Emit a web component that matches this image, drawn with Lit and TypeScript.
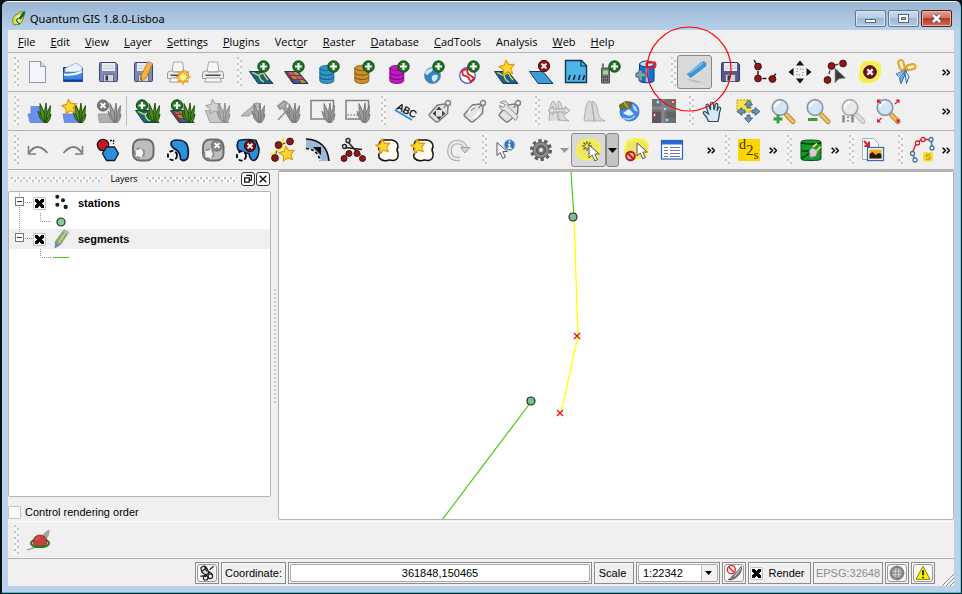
import { LitElement, html, svg, css, nothing, type TemplateResult } from "lit";
import { customElement, property } from "lit/decorators.js";
import { classMap } from "lit/directives/class-map.js";

/* ---------- shared icon parts, all in a 24 x 24 box ---------- */

const cross = (x: number, y: number, s: number, color: string, w: number) =>
  svg`<path d="M${x - s} ${y - s}l${2 * s} ${2 * s}M${x + s} ${y - s}l${-2 * s} ${2 * s}" stroke=${color} stroke-width=${w} fill="none"/>`;

const plus = (x = 14.5, y = 6.5) => svg`
  <circle cx=${x} cy=${y} r="5.7" fill="#1f7322" stroke="#0d4a12" stroke-width="1"/>
  <path d="M${x - 3.4} ${y}h6.8M${x} ${y - 3.4}v6.8" stroke="#fff" stroke-width="2.2"/>`;

const removeBadge = (x: number, y: number, fill = "#8e1616", edge = "#4e0808") => svg`
  <circle cx=${x} cy=${y} r="5.6" fill=${fill} stroke=${edge}/>
  ${cross(x, y, 2.4, "#fff", 2)}`;

const star = (x: number, y: number, r = 8, fill = "#ffd92e", edge = "#e29a10") => {
  const pts: string[] = [];
  for (let i = 0; i < 10; i++) {
    const a = -Math.PI / 2 - 0.15 + (i * Math.PI) / 5;
    const q = i % 2 ? r * 0.48 : r;
    pts.push(`${(x + q * Math.cos(a)).toFixed(1)},${(y + q * Math.sin(a)).toFixed(1)}`);
  }
  return svg`<polygon points=${pts.join(" ")} fill=${fill} stroke=${edge} stroke-width="1.2" stroke-linejoin="round"/>`;
};

const burst = (x: number, y: number) => {
  const pts: string[] = [];
  for (let i = 0; i < 16; i++) {
    const a = (i * Math.PI) / 8;
    const q = i % 2 ? 3.6 : 7;
    pts.push(`${(x + q * Math.cos(a)).toFixed(1)},${(y + q * Math.sin(a)).toFixed(1)}`);
  }
  return svg`<polygon points=${pts.join(" ")} fill="#fff48a" stroke="#f5a012" stroke-width="1.3"/>`;
};

const grass = (fill = "#4c8f1d", edge = "#17400a") => svg`
  <g fill=${fill} stroke=${edge} stroke-width=".8" stroke-linejoin="round">
    <path d="M18 23.500Q13 20 12 12Q16 16 19 23.500Z"/><path d="M19 23.500Q13 17 14 4.500Q19 12 20 23.500Z"/>
    <path d="M19 23.500Q17.500 12 20 4Q22 14 20.500 23.500Z"/><path d="M19.500 23.500Q20 13 24.500 6.500Q25 16 21 23.500Z"/>
    <path d="M20 23.500Q21 18 25 15Q24.500 21 21.500 23.500Z"/>
  </g>`;

const sheet = (fill: string) => svg`<path d="M.5 11.500H14L24 23.500H9z" fill=${fill} stroke="#15405c" stroke-width="1"/>`;

const vectorSheet = svg`${sheet("#1d5f8c")}
  <path d="M3 13c3-1 4 3 7 2s4-3 5-1 1 3 4 6M10 15c1 3 0 5 5 7" stroke="#dcea3a" stroke-width="1.300" fill="none"/>`;

const rasterSheet = svg`${sheet("#7c3846")}
  <path d="M4 12h4l2.500 3h-4z" fill="#cf5673"/><path d="M9 12h4l2.500 3h-4z" fill="#b8974b"/>
  <path d="M7 16h4l2.500 3h-4z" fill="#b3902e"/><path d="M12 16h4.500l2.500 3h-4.500z" fill="#c85873"/>
  <path d="M10 20h4l2 3h-4z" fill="#2f5fb0"/><path d="M15.500 20h4l2.500 3h-4.500z" fill="#b88d35"/>`;

const cylinder = (fill: string, edge: string) => svg`
  <path d="M.8 8v12.500c0 4 14 4 14 0V8" fill=${fill} stroke=${edge} stroke-width=".8"/>
  <ellipse cx="7.800" cy="8" rx="7" ry="2.600" fill=${fill} stroke=${edge} stroke-width=".8"/>
  <path d="M.8 12.500c0 3.600 14 3.600 14 0M.8 16.800c0 3.600 14 3.600 14 0" stroke=${edge} stroke-width="1" fill="none"/>`;

const floppy = (body: string, edge = "#39456e") => svg`
  <path d="M3.500 3.500q0-1 1-1h15l2 2v16q0 1-1 1h-16q-1 0-1-1z" fill=${body} stroke=${edge} stroke-width="1"/>
  <path d="M6 3h13v8H6z" fill="#eceef4"/><path d="M7 6h11M7 8.500h11" stroke="#c3c8d6"/>
  <path d="M7.500 14.500h10v7h-10z" fill="#d3d6de" stroke="#555e80" stroke-width=".8"/><path d="M9.500 15.500H12v5H9.500z" fill="#2c3558"/>`;

const printer = svg`
  <path d="M7.500 2h9l1.500 10H6z" fill="#f6f6f6" stroke="#a6a6a6"/>
  <path d="M1.500 14q0-3 3-3H7v1h10v-1h2.500q3 0 3 3v4.500h-21z" fill="#ececec" stroke="#9a9a9a"/>
  <path d="M4.500 14.500h15v1.500h-15z" fill="#4f4f4f"/><path d="M5 18h14l1.500 4h-17z" fill="#fafafa" stroke="#a0a0a0"/>`;

const node = (x: number, y: number, r = 3.4) =>
  svg`<circle cx=${x} cy=${y} r=${r} fill="#8e1818" stroke="#430707" stroke-width=".9"/>`;

const cursor = (x: number, y: number, fill = "#fff", edge = "#555") => svg`
  <path d="M${x} ${y}v13l3.200-3 2.600 5.800 2.600-1.200-2.600-5.600h4.500z" fill=${fill} stroke=${edge} stroke-width="1"/>`;

const ring = svg`<rect x="2" y="1.500" width="20.500" height="21" rx="7" fill="#bdbdbd" stroke="#6c6c6c" stroke-width="2"/>`;
const hole = (x: number, y: number, edge = "#000") =>
  svg`<circle cx=${x} cy=${y} r="4.600" fill="#f3f3f3" stroke=${edge} stroke-width="1.800" stroke-dasharray="4 2"/>`;

const lens = (fill: string, edge: string, handle: string, rim: string) => svg`
  <path d="M15.500 16l6.500 6.500" stroke=${rim} stroke-width="5" stroke-linecap="round"/>
  <path d="M15.500 16l6.500 6.500" stroke=${handle} stroke-width="3.200" stroke-linecap="round"/>
  <circle cx="9" cy="8.500" r="7.800" fill=${fill} stroke=${edge} stroke-width="1.700"/>
  <path d="M4 8q1-4.500 5-5" stroke="#fff" stroke-width="2" fill="none"/>`;
const colorLens = lens("#d3e6f5", "#8a98a5", "#f3bf5c", "#a97c35");

const tag = svg`<path d="M2 14.500L9.500 6l7.500-1 3 2.500-.500 7L11 22q-2 2-4 0l-5-4.500q-1.500-1.500 0-3z" fill="#e4e4e4" stroke="#7d7d7d" stroke-width="1.500"/>
  <circle cx="20" cy="4" r="2.500" fill="none" stroke="#838383" stroke-width="1.400"/><path d="M15.500 9l3-3" stroke="#838383" stroke-width="1.300"/>`;

const blobStar = svg`
  <path d="M7 2h9q6 1 6 7-2 3 0 6 1 7-5 7.500-4-1-6 0-5 1-8-3-1-4 2-5.500-3-1.500-2-6 0-5 4-6z" fill="#fffdf2" stroke="#111" stroke-width="1.500"/>${star(7, 8.500, 7.500)}`;

const blob = (y = 0) => svg`
  <path d="M4 ${4 + y}q8-3 15-1 5 4 3 9 0 8-6 8-6 2-12 0-5-4-3-9 0-4 3-7z" fill="#ebe56e" stroke="#f8f33c" stroke-width="2.500"/>`;

/* ---------- icons ---------- */

const icons: Record<string, TemplateResult> = {
  doc: svg`<path d="M3.500 1.500h11l5 5v16h-16z" fill="#f4f6fb" stroke="#8e96a8"/><path d="M14.500 1.500v5h5" fill="#d3d9e8" stroke="#8e96a8"/>`,
  open: svg`<path d="M2.500 7.500h5l2 1h12v13h-19z" fill="#2b66c4" stroke="#123c86"/><path d="M4 8.500l11-5.500 6 4v5H4z" fill="#eef2fa" stroke="#8ea6cf" stroke-width=".8"/>
    <path d="M2.500 12.500q10 1 19-2.500v11.500h-19z" fill="#4488e6"/><path d="M3 19.500h18.500v2H3z" fill="#0d3a8e"/><path d="M3 14.500q10 1 18-3" stroke="#f0f7ff" stroke-width="2" fill="none"/>`,
  save: floppy("#7d8ab3"),
  saveAs: svg`${floppy("#7d8ab3")}<path d="M10 16L17 1.500l4.500 2L15 18l-4 3z" fill="#f9b233" stroke="#b87614" stroke-width=".8"/><path d="M17 1.500l4.500 2-1 2.300L16 3.700z" fill="#e9a08c"/>`,
  print: printer,
  printNew: svg`${printer}${burst(17, 17)}`,
  addVector: svg`${vectorSheet}${plus()}`,
  addRaster: svg`${rasterSheet}${plus()}`,
  addPostgis: svg`${cylinder("#2f96c8", "#12597d")}${plus()}`,
  addSpatialite: svg`${cylinder("#cc9128", "#7a5210")}${plus()}`,
  addMssql: svg`${cylinder("#c416c4", "#6d0a6d")}${plus()}`,
  addWms: svg`<circle cx="8.500" cy="15.500" r="8" fill="#3584bd" stroke="#5d86a3" stroke-width=".8"/><path d="M2 11q3-3 7-3 0 4-4 5-1 4-4 0zM8 16q4-3 6 0-1 5-4 6-3-2-2-6z" fill="#cfe8f7"/>${plus()}`,
  addWfs: svg`<circle cx="8.500" cy="15.500" r="7.800" fill="#fdfdff" stroke="#3a57c4" stroke-width="1.200"/><path d="M3 11l5-2 1 5 6 4-3 4-3-5-5-2z" fill="none" stroke="#e02020" stroke-width="1.800"/>${plus()}`,
  newVector: svg`${vectorSheet}${star(13, 8, 8)}`,
  removeLayer: svg`${sheet("#3c9adb")}${removeBadge(15, 6)}`,
  digits: svg`<path d="M1.500 .5h16l5 5v17h-21z" fill="#4cb6e8" stroke="#16354a" stroke-width="1.400"/><path d="M17 1v5h5" fill="none" stroke="#16354a" stroke-width="1.200"/><path d="M6 15l-1.500 5M11 15l-1.500 5M16 15l-1.500 5M20.500 15l-1.500 5" stroke="#0c2231" stroke-width="1.500"/>`,
  gps: svg`<path d="M2.500 8h8v15h-8z" fill="#6f7a70" stroke="#4a514b"/><path d="M4 3.500V9" stroke="#777" stroke-width="2"/><path d="M4 10.500h5v4H4z" fill="#a8cfa0"/><path d="M4 17h6M4 20h6" stroke="#30362f" stroke-width="1.500" stroke-dasharray="1 1"/>${plus(15.5, 6.5)}`,
  oracle: svg`<path d="M5.500 4v16.500c0 3 14.500 3 14.500 0V4" fill="#1670d0" stroke="#0a3a86"/><ellipse cx="12.800" cy="4" rx="7.200" ry="3" fill="#b9ddfb" stroke="#0a3a86"/><path d="M13 8v14" stroke="#9ad0ff" stroke-width="2.500"/>
    <rect x="12.500" y="2.500" width="9" height="5" rx="1.500" fill="none" stroke="#f01414" stroke-width="1.800"/><path d="M2 13h3v-3h3.500v3H12v4H8.500v4H5v-4H2z" fill="#7aa3b0" stroke="#35616f"/>`,
  pencil: svg`<path d="M3 19q8 0 17 3.500-9 1-17-3.500z" fill="#bdbdbd"/><path d="M4 14.500L18.500 2.500q2-1.500 3.700 0t.300 3.700L8.500 17 4 17.500z" fill="#3d97dc" stroke="#2d79bb" stroke-width=".7"/><path d="M6.500 13L20 2.800" stroke="#8cc7f2" stroke-width="1.300"/><path d="M1.500 18.500l2.500-4 3 3z" fill="#ecdfc8"/>`,
  saveEdits: floppy("#54598c", "#35396a"),
  addFeature: svg`<path d="M1 0l4 7v11.500h14.500l4-6" stroke="#222" stroke-width="1.500" stroke-dasharray="4 2" fill="none"/>${node(5, 6.500)}${node(5, 18.500)}${node(19.5, 19)}`,
  moveFeature: svg`<path d="M12 .5l4 5H8zM12 23.500l4-5H8zM.5 12l5-4v8zM23.500 12l-5-4v8z" fill="#111"/><path d="M9 9h6v6H9z" fill="none" stroke="#666" stroke-dasharray="1 2"/>`,
  nodeTool: svg`<path d="M4.500 20l3.500-14 12-3" stroke="#333" stroke-width="1.300" stroke-dasharray="4 2" fill="none"/>${node(20, 3.500)}${node(8.500, 6)}${node(4.500, 20)}<path d="M12 8v15l3.500-4 7-1z" fill="#3c3c3c" stroke="#999" stroke-width=".7"/>`,
  deleteFeature: svg`<path d="M3 6q3-5 9-4 8-1 10 4 1 6-1 11-4 5-10 5-7 1-9-3-1-6 1-13z" fill="#f3ec62" stroke="#f8f33c" stroke-width="1.800"/><circle cx="12" cy="12" r="6.300" fill="#7c1010" stroke="#2c0505"/>${cross(12, 12, 2.600, "#fff", 2.200)}`,
  cut: svg`<path d="M14 10L8 23.500 6.500 18z" fill="#6db4ef" stroke="#2768ac"/><path d="M11.500 9l2 14.500 2.500-7z" fill="#e4f2fd" stroke="#2768ac"/><path d="M3 14l12-5.500L5.500 16.500z" fill="#8cc6f5" stroke="#2768ac" stroke-width=".8"/>
    <rect x="6" y="0" width="5" height="10" rx="2.500" transform="rotate(-14 8.500 5)" fill="none" stroke="#eda01e" stroke-width="2"/><rect x="13" y="4.500" width="9.500" height="5" rx="2.500" transform="rotate(-14 18 7)" fill="none" stroke="#eda01e" stroke-width="2"/>`,

  grassOpen: svg`<path d="M2 15h3V7.500h9V13h5l-1 10.500H4z" fill="#6b90ee" stroke="#5a80e0" stroke-width=".8"/>${grass()}`,
  grassNew: svg`<path d="M2 15h16v8.500H3.500z" fill="#6b90ee" stroke="#5a80e0" stroke-width=".8"/>${grass()}${star(8.5, 8, 7.800)}`,
  grassClose: svg`<path d="M2 15h16v8.500H3.500z" fill="#b0b0b0" stroke="#a0a0a0"/>${grass("#9b9b9b", "#707070")}${removeBadge(7, 6.500, "#777", "#686868")}`,
  grassVector: svg`${vectorSheet}${grass()}${plus(7, 6.500)}`,
  grassRaster: svg`${rasterSheet}${grass()}${plus(7, 6.500)}`,
  grassCreate: svg`<path d="M.5 11.500H14L24 23.500H5z" fill="#c8c8c8" stroke="#a0a0a0"/>${star(8.5, 8, 7.800, "#d2d2d2", "#ababab")}${grass("#aeaeae", "#858585")}`,
  grassEdit: svg`<path d="M1 17L16 4q3-1 4 2L9 17z" fill="#bcbcbc" stroke="#999"/>${grass("#9b9b9b", "#737373")}`,
  grassTools: svg`<path d="M3 7l6-5 3 2-2 3 10 14-3 2L8 9 5 10zM3 21L15 8" fill="#b0b0b0" stroke="#969696" stroke-width="1.800"/>${grass("#9b9b9b", "#737373")}`,
  grassRegion: svg`<rect x="1" y="1.500" width="22.500" height="18.500" fill="#f0f0f0" stroke="#808080" stroke-width="1.500"/>${grass("#9b9b9b", "#737373")}`,
  grassRegionEdit: svg`<rect x="1" y="1.500" width="22.500" height="18.500" fill="#f0f0f0" stroke="#808080" stroke-width="1.500"/><path d="M2 16h16" stroke="#808080" stroke-dasharray="2 1"/>${grass("#9b9b9b", "#737373")}`,
  label: svg`<text x="3" y="10" transform="rotate(27 3 10)" font-family="Liberation Sans, sans-serif" font-size="10" fill="#000" stroke="#000" stroke-width=".3">ABC</text><path d="M2 11l17 10" stroke="#1f8cf5" stroke-width="1.800"/>`,
  labelMove: svg`${tag}<path d="M11 7.500l3 3.500H8zM11 21l3-3.500H8zM4.500 14.500l3.500-3v6zM17.500 14.500l-3.500-3v6z" fill="#454545"/>`,
  labelRotate: svg`${tag}<path d="M6 14q1-5 6-6M16 12q-1 6-6 7" stroke="#fafafa" stroke-width="2.500" fill="none"/><path d="M8 12q1-3 4-3" stroke="#777" fill="none"/>`,
  labelChange: svg`${tag}<path d="M2 3.500q5-3.500 8 1v3l10 10-2.500 4L7 11.500q-5 0-5.500-5l4 2 2-3z" fill="#e6e6e6" stroke="#8a8a8a"/>`,
  stretchA: svg`<path d="M2 22q1-20 4-20t4 12l3 7.500M11 21V2q4 0 5 12 1 6 6 8z" fill="#d9d9d9" stroke="#b0b0b0"/><path d="M1 11.500l5-4v2.500h12V7.500l5 4-5 4V13H6v2.500z" fill="#dedede" stroke="#9d9d9d" stroke-width=".9"/>`,
  stretchB: svg`<path d="M2 22q2-20 5-20 3 0 4 12l2 8zM10 2q5 1 6 12 1 6 7 8H12z" fill="#d9d9d9" stroke="#b0b0b0"/>`,
  globe: svg`<circle cx="12.500" cy="12.500" r="9.500" fill="#3f86ea" stroke="#2c62ad" stroke-width=".8"/><path d="M6 14q6 5 11 1l-5-5z" fill="#e4f1ff"/><path d="M15 5l4 3 2 5-4-2z" fill="#bcdcff"/><path d="M6 19q7 3 12-2" stroke="#a3ccff" stroke-width="1.500" fill="none"/><path d="M2.500 6l6-3.500 6 1-1 5-5 1-5 1z" fill="#5d7d34" stroke="#7a4f22" stroke-width="1"/><path d="M7 3l4 6" stroke="#c2a349" stroke-width="1.500"/>`,
  georef: svg`<path d="M0 0h24v24H0z" fill="#717171"/><path d="M0 9h24M11 0v24" stroke="#888" stroke-width="3"/><path d="M0 13h9v11H0z" fill="#5b5b5b"/><path d="M15 13h9v6h-9z" fill="#646464"/><circle cx="6" cy="3" r="1.500" fill="#e8f2ff" stroke="#5b90c7"/><circle cx="13" cy="10" r="1.500" fill="#e8f2ff" stroke="#5b90c7"/><circle cx="15" cy="21" r="1.500" fill="#e8f2ff" stroke="#5b90c7"/><circle cx="21" cy="3" r="1.500" fill="#fff" stroke="#cf2222"/><circle cx="2.500" cy="16" r="1.500" fill="#fff" stroke="#cf2222"/>`,
  pan: svg`<path d="M7.500 22.500q-1-4-5-8-1-2 1.500-2l3.500 2.500L5 7q0-2.500 2.200-1.500L9.500 11V4.500q1-2.500 3 0L13 11l1.500-6q1.500-1.500 2.300 .5L16 12l1.500-3.500q2-1 2.200 1Q18 14 18 18l-1 4.500z" fill="#d3eafa" stroke="#2c4658" stroke-width="1.200"/>`,
  panSelection: svg`<path d="M1 1h14v12H1z" fill="#fbe24a" stroke="#b39a20" stroke-dasharray="2 1"/><path d="M12.500 1l4 5h-2.500v3h-3V6H8.500zM12.500 23.500l4-4.500h-2.500v-3h-3v3H8.500zM1 12.500l5-4V11h3v3H6v2.500zM24 12.500l-5-4V11h-3v3h3v2.500z" fill="#6b96b0" stroke="#385f77" stroke-width=".9"/>`,
  zoomIn: svg`${colorLens}<path d="M2.500 20h9M7 15.500v9" stroke="#3a9a3c" stroke-width="2.800"/>`,
  zoomOut: svg`${colorLens}<path d="M2 20.500h9.500" stroke="#3a9a3c" stroke-width="3"/>`,
  zoomNative: svg`${lens("#e9e9e9", "#aaa", "#dcdcdc", "#b0b0b0")}<path d="M2.500 16v7.500M11.500 16v7.500" stroke="#8a8a8a" stroke-width="2.500"/><path d="M7 17.500v1.500M7 21v1.500" stroke="#8a8a8a" stroke-width="2"/>`,
  zoomFull: svg`${colorLens}<path d="M1 .5h4L1 4.500zM23.500 .5h-4l4 4zM1 23.500h4L1 19.500zM23.500 23.500h-4l4-4z" fill="#d81f2c"/><path d="M2 1.500L5 4.500M22.500 1.500L19 5M2 22.500L5.500 19M22.500 22.500L20.500 20.500" stroke="#d81f2c" stroke-width="1.300"/>`,

  undo: svg`<path d="M3 15Q11 3 21.500 15" stroke="#7d7d7d" stroke-width="1.800" fill="none"/><path d="M2.500 8v8h7.500" stroke="#7d7d7d" stroke-width="1.600" fill="none"/>`,
  redo: svg`<path d="M2.500 15Q13 3 21 15" stroke="#7d7d7d" stroke-width="1.800" fill="none"/><path d="M21.500 8v8h-7.500" stroke="#7d7d7d" stroke-width="1.600" fill="none"/>`,
  simplify: svg`<circle cx="7" cy="7" r="5.700" fill="#c81920" stroke="#111" stroke-width="1.200"/><path d="M10.500 9h8l4 6.500-4 7h-8l-4-7z" fill="#2d8fdc" stroke="#0d1c33" stroke-width="1.300"/><path d="M14 2.500h3.500V6" stroke="#111" stroke-width="1.300" stroke-dasharray="2 1" fill="none"/>`,
  addRing: svg`${ring}${hole(8.5, 15, "#8b8b8b")}`,
  addPart: svg`<path d="M5 5q1-3 6-3 9 0 10.500 6 2 8-.500 13-4 3-6.500 0 0-6-4-9-6-3-5.500-7z" fill="#2d8fdc" stroke="#0d1c33" stroke-width="1.700"/>${hole(6.5, 17.500)}`,
  deleteRing: svg`${ring}${hole(8, 16, "#8b8b8b")}${removeBadge(16, 7.500, "#858585", "#707070")}`,
  deletePart: svg`<path d="M3 2.500q8-2 17 0l3 8q0 10-5 12-4 0-5-7-8-1-11-4-2-6 1-9z" fill="#2d8fdc" stroke="#0d1c33" stroke-width="1.700"/>${hole(5.5, 18)}${removeBadge(14, 8, "#751515", "#320606")}`,
  reshape: svg`<path d="M12 -1v11L-1 17" stroke="#f7ec21" stroke-width="1.700" fill="none"/><path d="M7 8l12-5M7 8l-3 12" stroke="#222" stroke-dasharray="3 2"/>${node(7.5, 7)}${node(19, 3.500)}${node(4, 20)}${star(16, 16, 8)}`,
  offset: svg`<path d="M0 1q21 1 23 22h-8Q13 11 0 10z" fill="#9db9d8"/><path d="M0 1q21 1 23 22" stroke="#111" stroke-width="1.600" fill="none"/><path d="M0 10.500q12 1 14 12.500" stroke="#111" stroke-width="1.600" stroke-dasharray="3 2" fill="none"/><path d="M7 9h8v8z" fill="#0c0c0c"/>`,
  split: svg`<path d="M7 4l8 9M4 9.500l17 2" stroke="#222" stroke-width="1.500"/><circle cx="7" cy="2.500" r="2" fill="none" stroke="#222" stroke-width="1.400"/><circle cx="3.500" cy="8.500" r="2" fill="none" stroke="#222" stroke-width="1.400"/><path d="M2 22q2-8 8-8M22 22q-1-6-6-8" stroke="#222" stroke-dasharray="3 2" fill="none"/>${node(3, 20.500, 3)}${node(8, 15.500, 3)}${node(16, 15.500, 3)}${node(21.5, 20.500, 3)}`,
  blobStar,
  rotate: svg`<path d="M14 21Q3 22 3.500 12 4 4 12 4q7 1 7.500 7" stroke="#a6a6a6" stroke-width="4.500" fill="none"/><path d="M14 21Q3 22 3.500 12 4 4 12 4q7 1 7.500 7" stroke="#e9e9e9" stroke-width="2.500" fill="none"/><path d="M14.500 9.500h9.500l-5 5.500z" fill="#cfcfcf" stroke="#a0a0a0"/>`,
  identify: svg`${cursor(3, 4.500)}<circle cx="15.500" cy="7" r="5.500" fill="#3c74bf" stroke="#b4cbe8"/><path d="M15.500 6v4M14 6.500h2M13.500 10.200h4" stroke="#fff" stroke-width="1.500"/><circle cx="15.500" cy="3.800" r="1" fill="#fff"/>`,
  gear: svg`<circle cx="12" cy="12" r="9.300" fill="none" stroke="#5e5e5e" stroke-width="3.500" stroke-dasharray="3.300 2.540"/><circle cx="12" cy="12" r="8" fill="#8d8d8d" stroke="#5e5e5e"/><circle cx="12" cy="12" r="4.500" fill="#707070" stroke="#4f4f4f"/><circle cx="12" cy="12" r="2" fill="#e9e9e9"/>`,
  select: svg`${blob()}<path d="M10 3v10M5 8h10M6.500 4.500l7 7M13.500 4.500l-7 7" stroke="#4d4a20" stroke-width="1.100"/><circle cx="10" cy="8" r="2" fill="#ebe56e"/>${cursor(12, 7)}`,
  deselect: svg`${blob(-1)}${cursor(12, 5)}<circle cx="5.500" cy="18" r="4.300" fill="#f1c3a0" stroke="#b81a1a" stroke-width="2"/><path d="M2.500 15l6 6" stroke="#b81a1a" stroke-width="2"/>`,
  table: svg`<rect x="1.500" y="2.500" width="21" height="18.500" fill="#fff" stroke="#2c62c4" stroke-width="1.200"/><path d="M1.500 2.500h21v4h-21z" fill="#2f66d0"/><path d="M4 9.500h4M10 9.500h10M4 12.500h4M10 12.500h10M4 15.500h4M10 15.500h10M4 18.500h4M10 18.500h10" stroke="#6d7a95" stroke-width="1.100"/>`,
  d2s: svg`<path d="M1 1h22v22H1z" fill="#ffd500"/><g font-family="Liberation Serif, serif" fill="#3b2f00"><text x="2" y="11" font-size="14">d</text><text x="9" y="17" font-size="15">2</text><text x="16.500" y="21" font-size="13">s</text></g>`,
  offline: svg`<path d="M2 4q0-2 10-2t10 2v17q0 1.500-10 1.500T2 21z" fill="#149a2c" stroke="#0a4d14"/><path d="M2 5q10 2 20 0M3 13h8" stroke="#08340e" stroke-width="1.400" fill="none"/><path d="M3 20q5-2 8-6" stroke="#0a4d14" stroke-width="2" fill="none"/><path d="M10 13l3-3.500 6 3-2 6-6 1z" fill="#d0d0d0" stroke="#777"/><path d="M14 9l4-3.500M18 12.500l3.500-4" stroke="#f0dc6a" stroke-width="1.700"/>`,
  export: svg`<path d="M1.500 .5h11l5 5v16h-16z" fill="#fcfcfc" stroke="#a5acb8"/><path d="M3 3l4 4M8 3.500V8H3.500" stroke="#d81f2c" stroke-width="2" fill="none"/><rect x="6.500" y="9.500" width="16" height="13" fill="#fff" stroke="#2e6db4" stroke-width="1.300"/><path d="M8.500 11.500h12v9h-12z" fill="#f4a926"/><path d="M8.500 16l3-2 3 3 3-2 3 1v4.500h-12z" fill="#2b1b06"/>`,
  digitize: svg`<path d="M5 22L2.500 15.500M21 1l1 8" stroke="#3c7494" stroke-width="1.500"/><path d="M2.500 15.500q2-8 5-11 3-3 6.500-3h7" stroke="#e01c28" stroke-width="1.400" fill="none"/><g fill="#fff" stroke-width="1.300"><circle cx="5" cy="22" r="2" stroke="#3c7494"/><circle cx="2.500" cy="15.500" r="2" stroke="#3c7494"/><circle cx="7.500" cy="5" r="2" stroke="#e01c28"/><circle cx="13" cy="1.500" r="2" stroke="#e01c28"/><circle cx="21" cy="1.500" r="2" stroke="#3c7494"/><circle cx="22" cy="10" r="2" stroke="#3c7494"/></g>
    <rect x="13" y="14" width="10" height="9.500" rx="2" fill="#f8dc2c"/><text x="15" y="22" font-family="Liberation Sans, sans-serif" font-size="9" font-weight="700" fill="#b99a10">S</text>`,
  sextante: svg`<path d="M1 22q8-2 12-9 5-9 10-11 1 6-6 12Q10 21 1 22z" fill="#a5a5a5" stroke="#8b8b8b" stroke-width=".6"/><ellipse cx="14" cy="15" rx="9" ry="4" fill="none" stroke="#2b7d18" stroke-width="2"/><path d="M7 14q1-7 7-7t7 7q-1 5-7 5t-7-5z" fill="#c2403e" stroke="#7b1c1c" stroke-width=".7"/><path d="M5 15.500q1 3.500 9 3.500t9-3.500" fill="none" stroke="#2b7d18" stroke-width="2"/><path d="M10 12l4-3" stroke="#de7770"/>`,
  logo: svg`<path d="M4 22Q-1 8 12 4l4-3 4 1Q22 14 14 21l-6 1z" fill="#d9e24a" stroke="#6f7a1a" stroke-width="1.400"/><path d="M7 18Q6 9 14 6l2 2q0 8-5 11z" fill="#f3f6b5"/><path d="M12 12L19 1l4-1-1 6-7 8z" fill="#176b25"/><path d="M8 15l6 6M12 11l-4 4" stroke="#176b25" stroke-width="2"/>`,
  mouse: svg`<g fill="none" stroke="#1c1c1c" stroke-width="1.800"><path d="M3 4q6-6 10 3l2 5q-5 4-8 1Q2 9 3 4z" fill="#ddd"/><path d="M5 9l7-5M8 2l4 8"/><path d="M14 10q6 2 6 6M2 17q5-2 9 1M22 2l-6 5"/><circle cx="10" cy="19" r="3.500"/><circle cx="17" cy="17" r="3.500"/></g>`,
  stopRender: svg`<path d="M23 2q2 9-8 17-6 5-12 3 4-1 6-5Q18 9 23 2z" fill="#7c7c7c" stroke="#4f4f4f"/><path d="M13 17L22 5" stroke="#e0e0e0" stroke-width="1.500"/><circle cx="8" cy="7" r="6" fill="#fbeeee" stroke="#d62834" stroke-width="2"/><path d="M4 3l8 8" stroke="#d62834" stroke-width="2"/>`,
  crs: svg`<circle cx="12" cy="12" r="9" fill="#e9e9e9" stroke="#838383" stroke-width="4"/><path d="M12 1v22M1 12h22" stroke="#777" stroke-width="1.400" fill="none"/><rect x="7.500" y="7.500" width="9" height="9" fill="none" stroke="#888" stroke-width="1.400"/>`,
  warning: svg`<path d="M12 2l10.500 19.500h-21z" fill="#fdf200" stroke="#8d8500" stroke-width="1.500" stroke-linejoin="round"/><path d="M12 8v7.500M12 17.500v2.500" stroke="#111" stroke-width="2.500"/>`,
  points: svg`<g fill="#1b1b1b"><circle cx="5" cy="2.500" r="3"/><circle cx="13.500" cy="8" r="3"/><circle cx="5" cy="14.500" r="3"/><circle cx="17.500" cy="18" r="3.200"/></g>`,
  layerPencil: svg`<path d="M15 -2l7 4L10 20l-8 5 0-9z" fill="#93ab6e" stroke="#6c8350"/><path d="M18 1L7 18" stroke="#c3d4a3" stroke-width="2"/><path d="M2 16l7 5-8 5z" fill="#6c8fc0"/><path d="M15 -2l7 4-1.500 2.500-7-4z" fill="#b4bcc8"/>`,
  float: svg`<path d="M8 3.500h12v11h-4M4 9.500h11v10H4z" fill="none" stroke="#111" stroke-width="3"/>`,
  close: svg`<path d="M4 4l16 16M20 4L4 20" stroke="#111" stroke-width="3.500"/>`,
};

const icon = (name: string) => html`<svg viewBox="0 0 24 24" aria-hidden="true">${icons[name]}</svg>`;

/* ---------- tool bar contents ---------- */

interface Tool { id: string; label: string; on?: boolean; menu?: boolean; sep?: boolean; }
interface Bar { tools: Tool[]; more?: boolean; fill?: boolean; }

const t = (id: string, label: string, extra: Partial<Tool> = {}): Tool => ({ id, label, ...extra });

const rows: Bar[][] = [
  [
    { tools: [t("doc", "New project"), t("open", "Open project"), t("save", "Save project"), t("saveAs", "Save project as"), t("printNew", "New print composer"), t("print", "Composer manager")] },
    { tools: [t("addVector", "Add vector layer"), t("addRaster", "Add raster layer"), t("addPostgis", "Add PostGIS layer"), t("addSpatialite", "Add SpatiaLite layer"), t("addMssql", "Add MSSQL layer"), t("addWms", "Add WMS layer"), t("addWfs", "Add WFS layer"), t("newVector", "New vector layer"), t("removeLayer", "Remove layer"), t("digits", "Add delimited text layer"), t("gps", "GPS tools"), t("oracle", "Oracle Spatial")] },
    { fill: true, more: true, tools: [t("pencil", "Toggle editing", { on: true }), t("saveEdits", "Save edits"), t("addFeature", "Add feature"), t("moveFeature", "Move feature"), t("nodeTool", "Node tool"), t("deleteFeature", "Delete selected"), t("cut", "Cut features")] },
  ],
  [
    { tools: [t("grassOpen", "Open mapset"), t("grassNew", "New mapset"), t("grassClose", "Close mapset"), t("grassVector", "Add GRASS vector", { sep: true }), t("grassRaster", "Add GRASS raster"), t("grassCreate", "Create GRASS vector"), t("grassEdit", "Edit GRASS vector"), t("grassTools", "GRASS tools"), t("grassRegion", "Display region"), t("grassRegionEdit", "Edit region")] },
    { tools: [t("label", "Labeling"), t("labelMove", "Move label"), t("labelRotate", "Rotate label"), t("labelChange", "Change label")] },
    { tools: [t("stretchA", "Local histogram stretch"), t("stretchB", "Full histogram stretch"), t("globe", "Globe"), t("georef", "Georeferencer")] },
    { fill: true, more: true, tools: [t("pan", "Pan map"), t("panSelection", "Pan to selection"), t("zoomIn", "Zoom in"), t("zoomOut", "Zoom out"), t("zoomNative", "Zoom to native resolution"), t("zoomFull", "Zoom full")] },
  ],
  [
    { tools: [t("undo", "Undo"), t("redo", "Redo"), t("simplify", "Simplify feature"), t("addRing", "Add ring"), t("addPart", "Add part"), t("deleteRing", "Delete ring"), t("deletePart", "Delete part"), t("reshape", "Reshape features"), t("offset", "Offset curve"), t("split", "Split features"), t("blobStar", "Merge features"), t("blobStar", "Merge attributes"), t("rotate", "Rotate point symbols")] },
    { fill: true, more: true, tools: [t("identify", "Identify features"), t("gear", "Actions", { menu: true }), t("select", "Select features", { on: true, menu: true }), t("deselect", "Deselect all"), t("table", "Attribute table")] },
    { more: true, tools: [t("d2s", "Dxf2Shp converter")] },
    { more: true, tools: [t("offline", "Offline editing")] },
    { tools: [t("export", "Export image")] },
    { more: true, tools: [t("digitize", "Digitizing tools")] },
  ],
];

/* Menu titles with the index of the underlined letter; -1 for none. */
const menus: [string, number][] = [["File", 0], ["Edit", 0], ["View", 0], ["Layer", 0], ["Settings", 0], ["Plugins", 0], ["Vector", 4], ["Raster", 0], ["Database", 0], ["CadTools", 0], ["Analysis", -1], ["Web", 0], ["Help", 0]];

const base = css`
  * { box-sizing: border-box; }
  button { font: inherit; color: inherit; margin: 0; padding: 0; border: 0; background: none; }
  svg { display: block; }
`;

const check = css`
  .check { appearance: none; flex: none; width: 13px; height: 13px; margin: 0; border: 1px solid #c4c4c4; border-radius: 1px; background: #fbfbfb; }
  .check:checked {
    background:
      linear-gradient(45deg, #fff0 36%, #000 36% 64%, #fff0 64%) 1px 1px / 9px 9px no-repeat,
      linear-gradient(-45deg, #fff0 36%, #000 36% 64%, #fff0 64%) 1px 1px / 9px 9px no-repeat #fbfbfb;
  }
`;

@customElement("tool-bar")
class ToolBar extends LitElement {
  @property({ attribute: false }) bar: Bar = { tools: [] };

  static styles = [base, css`
    :host { display: flex; align-items: center; padding-left: 8px; height: 38px; }
    .grip {
      width: 6px; height: 30px; flex: none;
      background:
        linear-gradient(90deg, #c6c6c6 2px, #fff0 2px) 0 0 / 6px 2px no-repeat,
        repeating-linear-gradient(#fff0 0 2px, #f0f0f0 2px 3px, #fff0 3px 5px, #f0f0f0 5px 6px),
        repeating-linear-gradient(#c6c6c6 0 2px, #fafafa 2px 6px) 0 0 / 2px 30px no-repeat,
        repeating-linear-gradient(#fafafa 0 3px, #c6c6c6 3px 5px, #fafafa 5px 6px) 3px 0 / 2px 30px no-repeat;
    }
    .tool { width: 35px; height: 34px; flex: none; display: flex; align-items: center; justify-content: center; }
    .tool svg { width: 24px; height: 24px; overflow: visible; }
    .on { background: #d9d9d9; border: 1px solid #868686; border-radius: 3px; }
    .drop { width: 13px; height: 34px; flex: none; display: flex; align-items: center; justify-content: center; color: #999; }
    .drop svg { width: 9px; height: 5px; }
    .drop.on { background: #c4c4c4; color: #000; }
    .sep { width: 1px; height: 30px; margin: 0 2px 0 1px; background: #bbb; flex: none; }
    .more { width: 13px; height: 20px; margin-left: auto; display: flex; align-items: center; justify-content: center; }
    .more svg { width: 8px; height: 7px; }
  `];

  render() {
    return html`
      <span class="grip"></span>
      ${this.bar.tools.map((tool) => html`
        ${tool.sep ? html`<span class="sep"></span>` : nothing}
        <button class=${classMap({ tool: true, on: !!tool.on })} aria-label=${tool.label} title=${tool.label}>${icon(tool.id)}</button>
        ${tool.menu ? html`<button class=${classMap({ drop: true, on: !!tool.on })} aria-label="${tool.label} menu">
          <svg viewBox="0 0 9 5"><path d="M0 0h9L4.500 5z" fill="currentColor"/></svg></button>` : nothing}`)}
      ${this.bar.more ? html`<button class="more" aria-label="More tools">
        <svg viewBox="0 0 8 7"><path d="M.7 .7l2.800 2.800-2.800 2.800M4.700 .7l2.800 2.800-2.800 2.800" fill="none" stroke="#000" stroke-width="1.500"/></svg></button>` : nothing}`;
  }
}

@customElement("layer-panel")
class LayerPanel extends LitElement {
  static styles = [base, check, css`
    :host { display: flex; flex-direction: column; font: 11px/16px "Liberation Sans", sans-serif; }
    .head { display: flex; align-items: center; height: 21px; gap: 8px; padding: 0 1px 3px 3px; font: 9px/16px "Open Sans", sans-serif; }
    .dots {
      flex: 1; height: 5px;
      background:
        repeating-linear-gradient(90deg, #c2c2c2 0 2px, #fafafa 2px 6px) 0 0 / 100% 2px no-repeat,
        repeating-linear-gradient(90deg, #fafafa 0 3px, #c2c2c2 3px 5px, #fafafa 5px 6px) 0 3px / 100% 2px no-repeat;
    }
    .btns { display: flex; gap: 1px; margin-left: -4px; }
    .btns button { width: 14px; height: 14px; border: 1px solid #333; border-radius: 3px; background: #fff; padding: 1px; }
    .btns svg { width: 10px; height: 10px; }
    .tree { flex: 1; background: #fff; border: 1px solid #b4b4b4; border-radius: 2px; margin: 0; padding: 1px 0; list-style: none; }
    .row { display: flex; align-items: center; height: 20px; }
    .row.leaf { height: 16px; }
    .row.active { background: #efefef; }
    .lines { flex: none; width: 24px; height: 20px; }
    .leaf .lines { width: 44px; height: 16px; }
    .row label { display: flex; align-items: center; font-weight: bold; margin-left: 8px; }
    label svg { width: 16px; height: 16px; margin-right: 8px; overflow: visible; }
    .symbol { width: 16px; height: 12px; }
    .line { width: 16px; height: 1px; background: #4ccb14; }
    .order { display: flex; align-items: center; gap: 4px; height: 24px; padding-top: 6px; }
  `];

  render() {
    const dotted = (d: string) => svg`<path d=${d} stroke="#999" stroke-dasharray="1 1" fill="none"/>`;
    const box = svg`<rect x="6.500" y="4.500" width="8" height="8" fill="#fff" stroke="#777"/><path d="M8 8.500h5" stroke="#333"/>`;
    return html`
      <div class="head">
        <span class="dots"></span><span>Layers</span><span class="dots"></span>
        <span class="btns"><button aria-label="Float panel">${icon("float")}</button><button aria-label="Close panel">${icon("close")}</button></span>
      </div>
      <ul class="tree">
        <li class="row">
          <svg class="lines">${dotted("M10.500 0V20M16 9.500h8")}${box}</svg>
          <input class="check" type="checkbox" id="stations" checked>
          <label for="stations">${icon("points")}stations</label>
        </li>
        <li class="row leaf">
          <svg class="lines">${dotted("M10.500 0V16M31.500 0V8.500H42")}</svg>
          <svg class="symbol"><circle cx="8" cy="7" r="4" fill="#8cc49c" stroke="#253529" stroke-width="1.200"/></svg>
        </li>
        <li class="row active">
          <svg class="lines">${dotted("M10.500 0V8M16 9.500h8")}${box}</svg>
          <input class="check" type="checkbox" id="segments" checked>
          <label for="segments">${icon("layerPencil")}segments</label>
        </li>
        <li class="row leaf">
          <svg class="lines">${dotted("M31.500 0V8.500H42")}</svg>
          <span class="line"></span>
        </li>
      </ul>
      <div class="order"><input class="check" type="checkbox" id="order"><label for="order">Control rendering order</label></div>`;
  }
}

@customElement("app-root")
class AppRoot extends LitElement {
  static styles = [base, check, css`
    :host {
      display: flex; flex-direction: column; min-height: 100vh; position: relative; overflow: hidden;
      box-sizing: border-box; padding: 1px 1px 1px 2px; background: #07141c; color: #000;
      font: 11px/16px "Open Sans", sans-serif;
    }
    .window {
      flex: 1; display: flex; flex-direction: column; padding: 0 6px 6px; border-radius: 6px 6px 0 0;
      border-top: 1px solid #fff; border-right: 1px solid #4fd6ea; border-bottom: 1px solid #28c8dc;
      background: linear-gradient(#99b4d1, #b9d1ea 29px);
    }
    .title { display: flex; align-items: center; height: 28px; padding: 5px 2px 0 3px; font-family: "Noto Sans", "Open Sans", sans-serif; }
    .title svg { width: 15px; height: 15px; margin-right: 4px; }
    .caption { flex: 1; }
    .sysbtns { display: flex; gap: 2px; }
    .sysbtns button { width: 31px; height: 17px; display: flex; align-items: center; justify-content: center; border: 1px solid #5f7590; border-radius: 2px; background: linear-gradient(#cbdbec, #b5cce5 50%, #9db7d5 50%, #b4cae2); box-shadow: inset 0 0 0 1px #d9e6f4; }
    .sysbtns .close { border-color: #5b1a16; background: linear-gradient(#e0a197, #cf6f60 50%, #b93a26 50%, #cf6a4c); box-shadow: inset 0 0 0 1px #e8b3a8; }
    .sysbtns svg { width: 13px; height: 11px; margin: 0; }
    .client { flex: 1; display: flex; flex-direction: column; background: #f0f0f0; }
    nav { display: flex; gap: 15px; height: 23px; padding: 3px 10px 2px; border-bottom: 1px solid #b2b2b2; }
    nav button u { text-underline-offset: 1px; }
    .bars { display: flex; height: 39px; padding-right: 2px; border-bottom: 1px solid #b2b2b2; overflow: hidden; }
    .bars tool-bar:first-child { padding-left: 6px; }
    .bars tool-bar:nth-child(2) { padding-left: 7px; }
    .fill { flex: 1; }
    .body { flex: 1; display: flex; min-height: 200px; }
    layer-panel { width: 263px; }
    .splitter { width: 7px; display: flex; align-items: center; justify-content: center; }
    .splitter span { width: 2px; height: 114px; background: repeating-linear-gradient(#c2c2c2 0 2px, #fafafa 2px 4px); }
    .map { flex: 1; margin: 0 0 1px; border: 1px solid #b4b4b4; border-top-width: 2px; border-radius: 2px; background: #fff; }
    .map svg { width: 100%; height: 100%; }
    .lower { height: 38px; display: flex; border-top: 1px solid #fbfbfb; border-bottom: 1px solid #b2b2b2; }
    .lower tool-bar { padding-left: 6px; height: 36px; }
    .status { display: flex; gap: 2px; height: 27px; padding-top: 3px; font: 11px/16px "Liberation Sans", sans-serif; }
    .cell { height: 22px; display: flex; align-items: center; justify-content: center; border: 1px solid #8c8c8c; box-shadow: inset 1px 1px 0 #fafafa; white-space: nowrap; }
    .sq { width: 24px; padding: 1px; }
    .sq button { flex: 1; height: 18px; display: flex; align-items: center; justify-content: center; border: 1px solid #9a9a9a; border-radius: 3px; background: #f8f8f8; }
    .sq svg { width: 16px; height: 16px; }
    .push { margin-left: auto; }
    .coordlabel { width: 65px; }
    .coord { flex: 0 1 304px; padding: 1px; }
    .coord input { width: 100%; height: 18px; border: 1px solid #a8a8a8; border-radius: 2px; background: #fff; font: inherit; text-align: center; padding: 0; }
    .scalelabel { width: 40px; padding-right: 3px; }
    .scale { width: 84px; padding: 1px; position: relative; }
    .scale select { appearance: none; width: 100%; height: 18px; border: 1px solid #a8a8a8; border-radius: 2px; font: inherit; color: #000; padding: 0 4px; background: linear-gradient(90deg, #fff 62px, #c0c0c0 62px 63px, #f2f2f2 63px); }
    .scale svg { position: absolute; right: 7px; top: 8px; width: 7px; height: 4px; pointer-events: none; }
    .render { width: 63px; padding-right: 4px; }
    .render label { display: flex; align-items: center; gap: 5px; }
    .epsg { width: 70px; color: #8c8c8c; }
    .sizer { width: 17px; height: 24px; display: flex; align-items: flex-end; justify-content: flex-end; }
    .halo { position: absolute; left: 646px; top: 26px; width: 86px; height: 86px; pointer-events: none; }
  `];

  render() {
    const x = (cx: number, cy: number) => svg`<path d="M${cx - 3} ${cy - 3}l6 6M${cx + 3} ${cy - 3}l-6 6" stroke="#f00" stroke-width="1.200"/>`;
    const dot = (cx: number, cy: number) => svg`<circle cx=${cx} cy=${cy} r="4" fill="#7fbb95" stroke="#1f2f26" stroke-width="1.200"/>`;
    return html`
      <div class="window">
        <header class="title">
          ${icon("logo")}<span class="caption">Quantum GIS 1.8.0-Lisboa</span>
          <span class="sysbtns">
            <button aria-label="Minimize"><svg viewBox="0 0 13 11"><rect x="1.500" y="6.500" width="10" height="3" fill="#fff" stroke="#53647c"/></svg></button>
            <button aria-label="Maximize"><svg viewBox="0 0 13 11"><rect x="1.500" y="1.500" width="10" height="8" fill="#fff" stroke="#53647c"/><rect x="4.500" y="4.500" width="4" height="2" fill="#a9c0dc" stroke="#53647c"/></svg></button>
            <button class="close" aria-label="Close"><svg viewBox="0 0 13 11"><path d="M3 2l7 7M10 2l-7 7" stroke="#53506a" stroke-width="4.500"/><path d="M3 2l7 7M10 2l-7 7" stroke="#fff" stroke-width="2.600"/></svg></button>
          </span>
        </header>
        <main class="client">
          <nav>${menus.map(([m, k]) => html`<button>${k < 0 ? m : html`${m.slice(0, k)}<u>${m[k]}</u>${m.slice(k + 1)}`}</button>`)}</nav>
          ${rows.map((bars) => html`<div class="bars">${bars.map((b) => html`<tool-bar class=${b.fill ? "fill" : ""} .bar=${b}></tool-bar>`)}</div>`)}
          <div class="body">
            <layer-panel></layer-panel>
            <div class="splitter"><span></span></div>
            <div class="map">
              <svg role="img" aria-label="Map canvas">
                <path d="M292 0l3 45M252 230L163 348" stroke="#4ccb14" stroke-width="1.200" fill="none"/>
                <path d="M295 45l4 119-17 77" stroke="#ff0" stroke-width="1.300" fill="none"/>
                ${x(294, 44)}${x(298, 164)}${x(281, 241)}${x(251, 229)}${dot(294, 45)}${dot(252, 229)}
              </svg>
            </div>
          </div>
          <div class="lower"><tool-bar .bar=${{ tools: [t("sextante", "SEXTANTE toolbox")] }}></tool-bar></div>
          <footer class="status">
            <div class="cell sq push"><button aria-label="Toggle mouse position">${icon("mouse")}</button></div>
            <label class="cell coordlabel" for="coord">Coordinate:</label>
            <div class="cell coord"><input id="coord" type="text" value="361848,150465"></div>
            <label class="cell scalelabel" for="scale">Scale</label>
            <div class="cell scale"><select id="scale"><option>1:22342</option></select><svg viewBox="0 0 7 4"><path d="M0 0h7L3.500 4z"/></svg></div>
            <div class="cell sq"><button aria-label="Stop rendering">${icon("stopRender")}</button></div>
            <div class="cell render"><label><input class="check" type="checkbox" checked>Render</label></div>
            <div class="cell epsg">EPSG:32648</div>
            <div class="cell sq"><button aria-label="Projection settings">${icon("crs")}</button></div>
            <div class="cell sq"><button aria-label="Messages">${icon("warning")}</button></div>
            <div class="sizer"><svg width="13" height="13"><path d="M1 13L13 1M5 13l8-8M9 13l4-4" stroke="#8c8c8c"/></svg></div>
          </footer>
        </main>
      </div>
      <svg class="halo" viewBox="0 0 86 86"><circle cx="43" cy="43" r="42" fill="none" stroke="#f00" stroke-width="1.200"/></svg>`;
  }
}
